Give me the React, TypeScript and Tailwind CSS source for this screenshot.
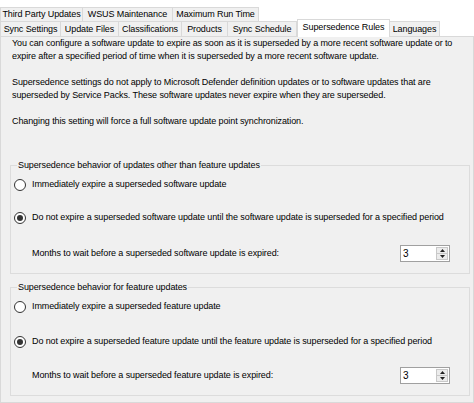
import React from "react";

const row1: [string, number][] = [
  ["Third Party Updates", 83],
  ["WSUS Maintenance", 90],
  ["Maximum Run Time", 86],
];

const row2: [string, number, boolean][] = [
  ["Sync Settings", 61, false],
  ["Update Files", 58, false],
  ["Classifications", 63, false],
  ["Products", 46, false],
  ["Sync Schedule", 69, false],
  ["Supersedence Rules", 93, true],
  ["Languages", 50, false],
];

function Radio({ checked, label, className }: { checked?: boolean; label: string; className?: string }) {
  return (
    <div className={"flex items-center h-[13px] pl-[3px] " + (className || "")}>
      <span className="flex items-center justify-center w-[12px] h-[12px] rounded-full border border-[#333333] bg-white shrink-0">
        {checked && <span className="w-[6px] h-[6px] rounded-full bg-[#333333]" />}
      </span>
      <span className="ml-[6px] whitespace-nowrap">{label}</span>
    </div>
  );
}

function Spinner() {
  return (
    <div className="flex w-[50px] h-[17px] border border-[#a0a0a0] bg-white">
      <div className="flex-1 pl-[2px] leading-[15px] text-[10px]">3</div>
      <div className="flex flex-col w-[12px] my-[1px] mr-[1px] border border-[#c8c8c8] bg-[#ececec]">
        <div className="flex-1 flex items-center justify-center border-b border-[#c8c8c8]">
          <svg width="5" height="3" viewBox="0 0 5 3">
            <path d="M2.5 0 L5 3 L0 3 Z" fill="#222" />
          </svg>
        </div>
        <div className="flex-1 flex items-center justify-center">
          <svg width="5" height="3" viewBox="0 0 5 3">
            <path d="M0 0 L5 0 L2.5 3 Z" fill="#222" />
          </svg>
        </div>
      </div>
    </div>
  );
}

export default function App() {
  return (
    <div className="w-[474px] h-[403px] overflow-hidden bg-white text-black text-[9px] leading-[13px] tracking-[-0.1px] font-['Liberation_Sans',Arial,sans-serif]">
      <div className="flex h-[14px] mt-[7px]">
        {row1.map(([label, w], i) => (
          <div
            key={label}
            style={{ width: w }}
            className={
              "flex items-center justify-center h-full whitespace-nowrap border-t border-r border-[#d9d9d9] bg-[#f0f0f0] " +
              (i === 0 ? "border-l" : "")
            }
          >
            {label}
          </div>
        ))}
      </div>
      <div className="flex items-end h-[15px]">
        {row2.map(([label, w, sel], i) =>
          sel ? (
            <div
              key={label}
              style={{ width: w }}
              className="relative z-10 flex items-center justify-center h-[18px] -mb-px pb-[2px] whitespace-nowrap border-t border-l border-r border-[#d9d9d9] bg-white"
            >
              {label}
            </div>
          ) : (
            <div
              key={label}
              style={{ width: w }}
              className={
                "flex items-center justify-center h-full whitespace-nowrap border-t border-r border-[#d9d9d9] bg-[#f0f0f0] " +
                (i === 0 ? "border-l" : "")
              }
            >
              {label}
            </div>
          )
        )}
      </div>
      <div className="h-[367px] border border-[#d9d9d9] bg-[#f0f0f0] pl-[9px] pr-[3px]">
        <div className="ml-[2px] whitespace-nowrap">
          <p>
            You can configure a software update to expire as soon as it is superseded by a more recent software update or to
            <br />
            expire after a specified period of time when it is superseded by a more recent software update.
          </p>
          <p className="mt-[13px]">
            Supersedence settings do not apply to Microsoft Defender definition updates or to software updates that are
            <br />
            superseded by Service Packs. These software updates never expire when they are superseded.
          </p>
          <p className="mt-[13px]">Changing this setting will force a full software update point synchronization.</p>
        </div>

        <fieldset className="mt-[31px] border border-[#dcdcdc] pb-[11px]">
          <legend className="ml-[6px] px-[1px] whitespace-nowrap">
            Supersedence behavior of updates other than feature updates
          </legend>
          <Radio className="mt-[6px]" label="Immediately expire a superseded software update" />
          <Radio
            className="mt-[20px]"
            checked
            label="Do not expire a superseded software update until the software update is superseded for a specified period"
          />
          <div className="mt-[21px] flex items-center justify-between h-[17px] pl-[21px] pr-[19px]">
            <span className="whitespace-nowrap">Months to wait before a superseded software update is expired:</span>
            <Spinner />
          </div>
        </fieldset>

        <fieldset className="mt-[7px] border border-[#dcdcdc] pb-[11px]">
          <legend className="ml-[6px] px-[1px] whitespace-nowrap">Supersedence behavior for feature updates</legend>
          <Radio className="mt-[6px]" label="Immediately expire a superseded feature update" />
          <Radio
            className="mt-[22px]"
            checked
            label="Do not expire a superseded feature update until the feature update is superseded for a specified period"
          />
          <div className="mt-[19px] flex items-center justify-between h-[17px] pl-[21px] pr-[19px]">
            <span className="whitespace-nowrap">Months to wait before a superseded feature update is expired:</span>
            <Spinner />
          </div>
        </fieldset>
      </div>
    </div>
  );
}
